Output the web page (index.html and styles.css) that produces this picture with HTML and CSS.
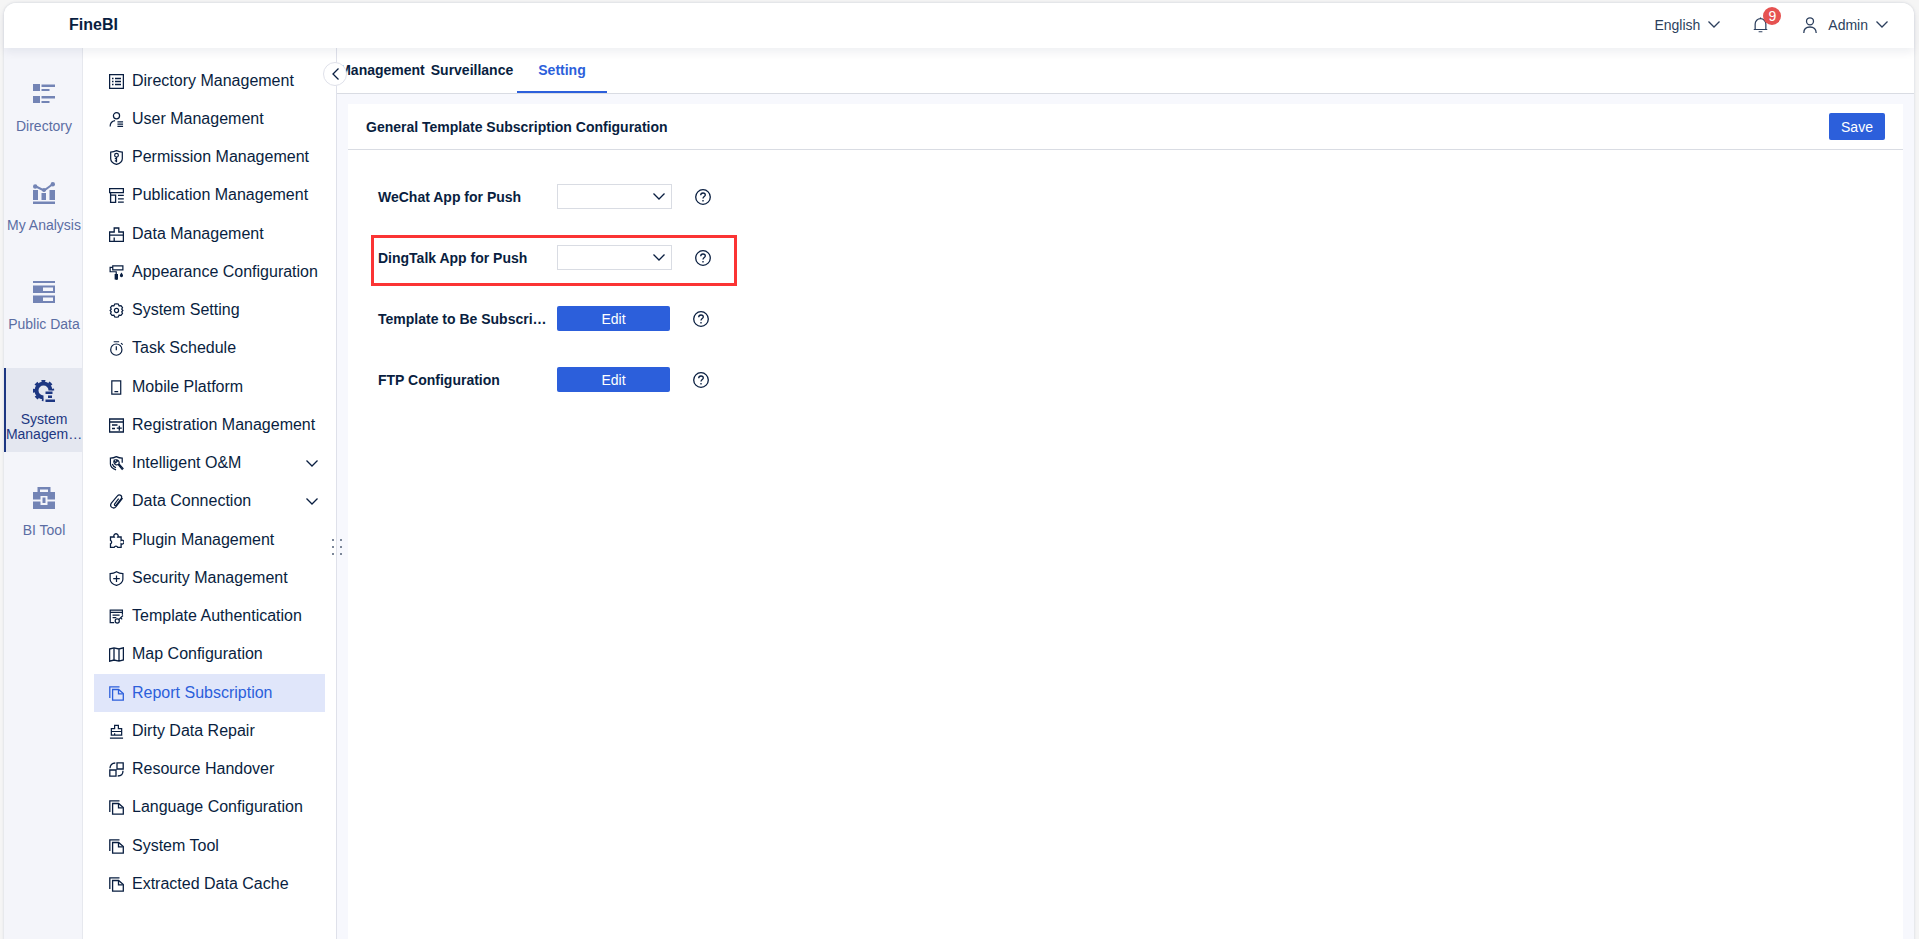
FILE: index.html
```html
<!DOCTYPE html>
<html lang="en">
<head>
<meta charset="utf-8">
<title>FineBI</title>
<link rel="stylesheet" href="styles.css">
</head>
<body>
<svg class="sprite" aria-hidden="true">
  <symbol id="i-directory" viewBox="0 0 15 15"><path d="M.6.6h13.800v13.800H.6zM3 4.500h1.500M3 7.500h1.500M3 10.500h1.500M6 4.500h6M6 7.500h6M6 10.500h6"/></symbol>
  <symbol id="i-user" viewBox="0 0 15 16"><circle cx="7.500" cy="4" r="3.300"/><path d="M.7 15.500c0-3.500 2-5.700 5.300-6.200M8.500 10.500h6M8.500 13h6M8.500 15.400h6"/></symbol>
  <symbol id="i-permission" viewBox="0 0 15 16"><path d="M7.500.7c2 1 4 1.500 6.200 1.500v7c0 3-2.600 5-6.200 6.200C3.900 14.200 1.300 12.200 1.300 9.200v-7C3.500 2.200 5.500 1.700 7.500.7z"/><circle cx="7.500" cy="5.500" r="2"/><path d="M7.500 7.500v5.500M7.500 9.300H5.700M7.500 11.500H5.700"/></symbol>
  <symbol id="i-publication" viewBox="0 0 15 15"><path d="M.6.6h13.800v4H.6zM1.600 7.200h5v7.200h-5zM1.600 4.600v3M9 7.400h5.800M9 10.800h5.800M9 14.200h5.800"/></symbol>
  <symbol id="i-data" viewBox="0 0 15 15"><path d="M.6 14.400V5h4.600V1h4.600v4h4.600v9.400zM.6 8.200h13.800M5.200 14v-3.600"/></symbol>
  <symbol id="i-appearance" viewBox="0 0 15 16"><path d="M3.500 1h10.800v4.200H3.500zM3.500 2.500H.7v4.700h6.500v2.500"/><path class="solid" d="M5.500 9.500h3.600V15c0 .6-.8 1-1.800 1s-1.800-.4-1.800-1zM12.800 8c1 1.500 1.700 2.300 1.700 3.300a1.700 1.700 0 0 1-3.400 0c0-1 .7-1.800 1.700-3.300z"/></symbol>
  <symbol id="i-setting" viewBox="0 0 15 16"><path d="M7.500.8 9.400 1.200 10.200 3 12.300 2.800 13.900 4.800 13.100 6.600 14.300 8 13.100 9.400 13.900 11.200 12.300 13.200 10.200 13 9.400 14.800 7.500 15.200 5.600 14.800 4.800 13 2.700 13.200 1.100 11.200 1.900 9.400.7 8l1.200-1.400-.8-1.800 1.600-2 2.100.2.800-1.800z"/><circle cx="7.500" cy="8" r="2.200"/></symbol>
  <symbol id="i-task" viewBox="0 0 15 16"><circle cx="7.300" cy="9.200" r="6"/><path d="M4.500.8h5.800M7.300 5.500v4.300M12.300 2.300l1.800 1.600"/></symbol>
  <symbol id="i-mobile" viewBox="0 0 15 16"><path d="M2.500 1h9.500v14H2.500zM5.300 12.300h4"/></symbol>
  <symbol id="i-registration" viewBox="0 0 15 15"><path d="M.6 1h13.800v13H.6zM.6 4h13.800M3 7h5.500M3 10.500h3M7.800 10.200h5M10.300 7.700v5"/></symbol>
  <symbol id="i-intelligent" viewBox="0 0 15 16"><path d="M7 14.800C3.500 13.500 1 11.500 1 8.500V2.300C3.500 2.300 5.500 1.700 7.300.7c2 1 4 1.600 6.300 1.600v5"/><path d="M5 4.500a3.300 3.300 0 0 0 4.300 4.600l4.200 5.200 1-1-4.300-5A3.300 3.300 0 0 0 6.800 4l1.500 1.500-1.700 1.700zM3 8.500c.6 2 1.800 3 4 4"/></symbol>
  <symbol id="i-connection" viewBox="0 0 15 16"><path d="M9.800 5 5.600 10.600c-1 1.300.6 2.500 1.600 1.200l5.300-7c2-2.800-2-5.200-4-2.700L2 9.800c-2.400 3.700 2.200 7 5 3.600l7-9"/></symbol>
  <symbol id="i-plugin" viewBox="0 0 15 15"><path d="M1.500 4h3.700a2.100 2.100 0 1 1 3.600 0h3.300v3.500a1.900 1.900 0 1 1 0 3.200v3.600H8.700a1.900 1.900 0 0 0-3.500 0H1.500v-3.500a1.900 1.900 0 0 0 0-3.500z"/></symbol>
  <symbol id="i-security" viewBox="0 0 15 16"><path d="M7.500.7c2 1.300 4.300 2 6.800 2v6c0 3.500-3 5.500-6.800 6.700C3.700 14.200.7 12.200.7 8.700v-6c2.500 0 4.800-.7 6.800-2zM7.500 4.700v7M4 8.200h7"/></symbol>
  <symbol id="i-template" viewBox="0 0 15 16"><path d="M5 14.500H.8V1.200h13v5M1 3.500h12.600M3.300 6.500h7.500M3.300 9.300h4"/><circle cx="8.300" cy="12.800" r="2.200"/><path d="m9.800 11.300 4.600-4.300M12 9.300l1.500 1.700"/></symbol>
  <symbol id="i-map" viewBox="0 0 15 15"><path d="m.6 2 4.400-1.200 5 1.200 4.400-1.200V13L10 14.200 5 13 .6 14.200zM5 .8V13M10 2v12"/></symbol>
  <symbol id="i-report" viewBox="0 0 15 15"><path d="M.8 12V.8h9.700M3.600 3.500h6l4.700 4v6.700H3.600z"/><path d="M9.500 3.800v4h4.300"/></symbol>
  <symbol id="i-dirty" viewBox="0 0 15 16"><path d="M2 11.800V5h3.500V1.500h4V5H13v6.800zM2 8h11M5.500 11.500V9.800M.5 15h14"/></symbol>
  <symbol id="i-handover" viewBox="0 0 15 15"><path d="M8 .8h6.200V7H8zM.8 8H7v6.200H.8zM1 6.300C1 3.200 3 1 6.300 1M14 8.700c0 3.100-2 5.300-5.300 5.300"/></symbol>
  <symbol id="i-chevron" viewBox="0 0 12 7"><path d="m.5.5 5.500 5.500L11.500.5"/></symbol>
  <symbol id="i-help" viewBox="0 0 16 16"><circle cx="8" cy="8" r="7.300"/><path d="M5.700 6.300C5.700 4.800 6.700 4 8 4s2.300.8 2.300 2c0 1.500-2.300 1.700-2.300 3.600M8 11v1.500"/></symbol>
</svg>

<div class="frame">
  <header class="topbar">
    <h1 class="brand">FineBI</h1>
    <div class="tools">
      <button class="tool language" type="button">English <svg class="chevron"><use href="#i-chevron"/></svg></button>
      <button class="tool bell" type="button" aria-label="Messages">
        <svg viewBox="0 0 16 16"><path d="M.8 12.800h14.400M2.300 12.500V7a5.700 5.700 0 0 1 11.400 0v5.500M6 15.200h4M8 0v1"/></svg>
        <span class="badge">9</span>
      </button>
      <button class="tool account" type="button">
        <svg class="person" viewBox="0 0 14 16"><circle cx="7" cy="4.300" r="3.500"/><path d="M.8 16c0-4 2.500-6 6.200-6s6.200 2 6.200 6"/></svg>
        Admin <svg class="chevron"><use href="#i-chevron"/></svg></button>
    </div>
  </header>

  <div class="body">
    <nav class="rail" aria-label="Modules">
      <a class="module" href="#"><svg viewBox="0 0 22 22"><path d="M0 1h7v7H0zM8.500 1.500H22V4H8.500zM8.500 6h8v2h-8zM0 13h7v7H0zM8.500 13H22v2.500H8.500zM8.500 18h8v2h-8z"/></svg><span class="label">Directory</span></a>
      <a class="module" href="#"><svg viewBox="0 0 22 22"><path d="M0 8h5v10H0zM8.500 11h4.500v7H8.500zM16.500 8H22v10h-5.500zM0 19.500h22V22H0z"/><path class="line" d="m2 4 9 4.500 9-6.500"/><circle cx="2.200" cy="4.500" r="2.200"/><circle cx="11" cy="8" r="2"/><circle cx="19.800" cy="2.300" r="2.200"/></svg><span class="label">My Analysis</span></a>
      <a class="module" href="#"><svg viewBox="0 0 22 22"><path fill-rule="evenodd" d="M0 0h22v2H0zM0 4.500h22v7.500H0zM10 6.500v3.500h10V6.500zM0 14.500h22V22H0zM10 16.500V20h10v-3.500z"/></svg><span class="label">Public Data</span></a>
      <a class="module active" href="#" aria-current="page"><svg viewBox="0 0 22 22"><path class="ring" d="M17.500 10.500a7 7 0 1 0-7 7"/><path class="teeth" d="M20 10.500a9.500 9.500 0 1 0-9.500 9.500"/><path d="M12.500 11.500h7V14h-7zM15 15.500h4V18h-4zM12.500 19.500H22V22h-9.500z"/></svg><span class="label"><span>System</span><span>Managem…</span></span></a>
      <a class="module" href="#"><svg viewBox="0 0 22 22"><path fill-rule="evenodd" d="M4.500 5V0h13v5H22v7.500h-7.500V9h-7v3.500H0V5zM7 5h8V2.500H7zM9.500 10.500h3V16h-3zM0 14.500h7.500V18h7v-3.500H22V22H0z"/></svg><span class="label">BI Tool</span></a>
    </nav>

    <nav class="menu" aria-label="System Management">
      <ul>
        <li><a href="#"><svg><use href="#i-directory"/></svg>Directory Management</a></li>
        <li><a href="#"><svg><use href="#i-user"/></svg>User Management</a></li>
        <li><a href="#"><svg><use href="#i-permission"/></svg>Permission Management</a></li>
        <li><a href="#"><svg><use href="#i-publication"/></svg>Publication Management</a></li>
        <li><a href="#"><svg><use href="#i-data"/></svg>Data Management</a></li>
        <li><a href="#"><svg><use href="#i-appearance"/></svg>Appearance Configuration</a></li>
        <li><a href="#"><svg><use href="#i-setting"/></svg>System Setting</a></li>
        <li><a href="#"><svg><use href="#i-task"/></svg>Task Schedule</a></li>
        <li><a href="#"><svg><use href="#i-mobile"/></svg>Mobile Platform</a></li>
        <li><a href="#"><svg><use href="#i-registration"/></svg>Registration Management</a></li>
        <li><a href="#"><svg><use href="#i-intelligent"/></svg>Intelligent O&amp;M<svg class="chevron"><use href="#i-chevron"/></svg></a></li>
        <li><a href="#"><svg><use href="#i-connection"/></svg>Data Connection<svg class="chevron"><use href="#i-chevron"/></svg></a></li>
        <li><a href="#"><svg><use href="#i-plugin"/></svg>Plugin Management</a></li>
        <li><a href="#"><svg><use href="#i-security"/></svg>Security Management</a></li>
        <li><a href="#"><svg><use href="#i-template"/></svg>Template Authentication</a></li>
        <li><a href="#"><svg><use href="#i-map"/></svg>Map Configuration</a></li>
        <li><a class="active" href="#" aria-current="page"><svg><use href="#i-report"/></svg>Report Subscription</a></li>
        <li><a href="#"><svg><use href="#i-dirty"/></svg>Dirty Data Repair</a></li>
        <li><a href="#"><svg><use href="#i-handover"/></svg>Resource Handover</a></li>
        <li><a href="#"><svg><use href="#i-report"/></svg>Language Configuration</a></li>
        <li><a href="#"><svg><use href="#i-report"/></svg>System Tool</a></li>
        <li><a href="#"><svg><use href="#i-report"/></svg>Extracted Data Cache</a></li>
      </ul>
      <button class="collapse" type="button" aria-label="Collapse menu"><svg viewBox="0 0 7 12"><path d="M6.500.5 1 6l5.500 5.500"/></svg></button>
      <span class="grip"><i></i><i></i><i></i><i></i><i></i><i></i></span>
    </nav>

    <main class="content">
      <div class="tabs">
        <button class="tab" type="button">Management</button>
        <button class="tab" type="button">Surveillance</button>
        <button class="tab active" type="button">Setting</button>
      </div>
      <section class="card">
        <div class="card-head">
          <h2>General Template Subscription Configuration</h2>
          <button class="primary save" type="button">Save</button>
        </div>
        <form class="settings">
          <div class="row">
            <label for="wechat">WeChat App for Push</label>
            <span class="picker"><select id="wechat"><option></option></select><svg class="chevron"><use href="#i-chevron"/></svg></span>
            <svg class="help"><use href="#i-help"/></svg>
          </div>
          <div class="row marked">
            <label for="dingtalk">DingTalk App for Push</label>
            <span class="picker"><select id="dingtalk"><option></option></select><svg class="chevron"><use href="#i-chevron"/></svg></span>
            <svg class="help"><use href="#i-help"/></svg>
          </div>
          <div class="row">
            <label for="template">Template to Be Subscri…</label>
            <button class="primary edit" id="template" type="button">Edit</button>
            <svg class="help"><use href="#i-help"/></svg>
          </div>
          <div class="row">
            <label for="ftp">FTP Configuration</label>
            <button class="primary edit" id="ftp" type="button">Edit</button>
            <svg class="help"><use href="#i-help"/></svg>
          </div>
        </form>
      </section>
    </main>
  </div>
</div>
</body>
</html>
```
FILE: styles.css
```css
*, *::after { box-sizing: border-box; }

body {
  margin: 0;
  padding: 3px 5px 0 4px;
  background: #f5f5f5;
  color: #091e40;
  font: 14px/20px "Liberation Sans", Arial, sans-serif;
}

button, select { font: inherit; color: inherit; }
button { border: 0; padding: 0; background: none; cursor: pointer; }
a { color: inherit; text-decoration: none; }
h1, h2, ul { margin: 0; padding: 0; }
li { list-style: none; }

svg {
  flex: none;
  fill: none;
  stroke: currentColor;
  stroke-width: 1.3;
}
.solid { fill: currentColor; stroke: none; }
.sprite { position: absolute; width: 0; height: 0; }
.chevron { width: 12px; height: 7px; }

.frame {
  display: flex;
  flex-direction: column;
  min-height: calc(100vh - 3px);
  border-radius: 12px 12px 0 0;
  background: #fff;
  box-shadow: 0 0 2px 1px #e2e4e8;
}

.topbar {
  position: relative;
  z-index: 2;
  display: flex;
  align-items: center;
  justify-content: space-between;
  height: 45px;
  padding: 0 26px 2px 65px;
  border-radius: 12px 12px 0 0;
  background: #fff;
  box-shadow: 0 4px 10px rgba(9, 30, 64, 0.07);
}
.brand { font-size: 16px; line-height: 20px; }
.tools { display: flex; align-items: center; color: #2c3f5d; }
.tool { display: flex; align-items: center; gap: 8px; }
.bell { position: relative; margin: 0 35px 0 33px; }
.bell svg { width: 15px; height: 16px; }
.person { width: 14px; height: 16px; margin-right: 3px; }
.badge {
  position: absolute;
  left: 10px;
  bottom: 8px;
  width: 18px;
  height: 18px;
  border-radius: 50%;
  background: #e65251;
  color: #fff;
  line-height: 18px;
  text-align: center;
}

.body { display: flex; flex: 1; }

.rail {
  display: flex;
  flex-direction: column;
  gap: 23px;
  width: 79px;
  padding-top: 23px;
  border-right: 1px solid #e6e8ee;
  background: #f4f5fa;
  color: #5b6da3;
}
.module {
  display: flex;
  flex-direction: column;
  align-items: center;
  gap: 10px;
  padding: 12px 0 10px;
  border-left: 2px solid transparent;
}
.module svg { width: 22px; height: 22px; fill: #7384b5; stroke: none; }
.module .line { fill: none; stroke: #7384b5; stroke-width: 2; }
.module .ring { fill: none; stroke: #1d3782; stroke-width: 4; }
.module .teeth { fill: none; stroke: #1d3782; stroke-width: 2.4; stroke-dasharray: 3.8 3.66; stroke-dashoffset: 1.9; }
.module.active { border-color: #1d3782; background: #e4e7f0; color: #1d3782; }
.module.active svg { fill: #1d3782; }
.label {
  display: flex;
  flex-direction: column;
  align-items: center;
  justify-content: center;
  width: 100%;
  min-height: 22px;
  line-height: 15px;
}

.menu {
  position: relative;
  width: 254px;
  padding: 14px 11px 0 11px;
  border-right: 1px solid #dfe1ea;
}
.menu li:nth-child(4n) { margin-bottom: 1px; }
.menu a {
  display: flex;
  align-items: center;
  gap: 8px;
  height: 38px;
  padding: 0 7px 0 15px;
  font-size: 16px;
  white-space: nowrap;
}
.menu a svg:first-child { width: 15px; height: 15px; }
.menu a .chevron { margin-left: auto; }
.menu .active { background: #e0e6fa; color: #2c5fdb; }

.collapse {
  position: absolute;
  top: 14px;
  right: -11px;
  z-index: 1;
  display: grid;
  place-items: center;
  width: 24px;
  height: 24px;
  border: 1px solid #dfe1ea;
  border-radius: 50%;
  background: #fff;
}
.collapse svg { width: 7px; height: 12px; }
.grip {
  position: absolute;
  top: 491px;
  right: -6px;
  display: grid;
  grid-template-columns: 2px 2px;
  gap: 5px 6px;
}
.grip i { width: 2px; height: 2px; background: #7c8799; }

.content {
  display: flex;
  flex: 1;
  flex-direction: column;
  min-width: 0;
  background: #f7f8fd;
}
.tabs {
  display: flex;
  height: 46px;
  border-bottom: 1px solid #d9dce3;
  background: #fff;
}
.tab { width: 90px; border-bottom: 2px solid transparent; font-weight: bold; }
.tab.active { border-color: #2c5fdb; color: #2c5fdb; }

.card { flex: 1; margin: 10px 11px 0; background: #fff; }
.card-head {
  display: flex;
  align-items: center;
  justify-content: space-between;
  height: 46px;
  padding: 0 18px;
  border-bottom: 1px solid #d9dce3;
}
h2 { font-size: 14px; }
.primary { border-radius: 2px; background: #2c5fdb; color: #fff; }
.save { width: 56px; height: 27px; }

.settings { padding: 16px 30px; }
.row { position: relative; display: flex; align-items: center; height: 61px; }
.row label { width: 179px; font-weight: bold; white-space: nowrap; }
.picker { display: grid; align-items: center; width: 115px; }
.picker > * { grid-area: 1 / 1; }
.picker select {
  width: 100%;
  height: 25px;
  border: 1px solid #d9dce3;
  border-radius: 0;
  background: #fff;
  appearance: none;
}
.picker .chevron { justify-self: end; margin-right: 7px; pointer-events: none; }
.edit { width: 113px; height: 25px; }
.help { width: 16px; height: 16px; margin-left: 23px; }
.marked::after {
  content: "";
  position: absolute;
  top: 8px;
  left: -7px;
  width: 366px;
  height: 51px;
  border: 3px solid #fb3434;
  pointer-events: none;
}
```
